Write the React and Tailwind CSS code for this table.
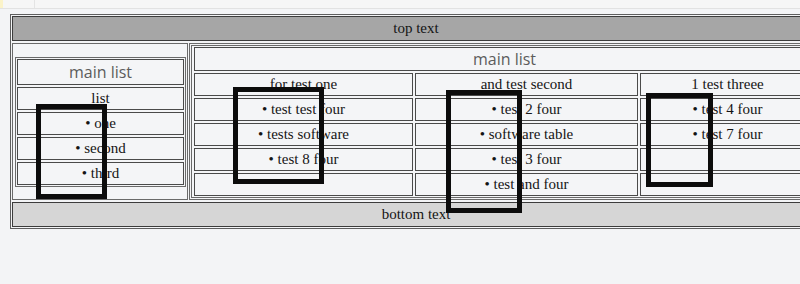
import React from "react";

const serif = { fontFamily: '"Liberation Serif", "Times New Roman", serif' };
const sans = { fontFamily: '"Open Sans", "DejaVu Sans", sans-serif' };

function Cell({ children, className = "", head = false }) {
  return (
    <div
      className={`border border-[#4a4a4a] bg-[#f4f5f7] flex items-center justify-center leading-none whitespace-nowrap ${
        head ? "text-[16px] text-[#5c5c5c]" : "text-[15px] text-[#141414]"
      } ${className}`}
      style={head ? sans : serif}
    >
      {children}
    </div>
  );
}

function Box({ className }) {
  return <div className={`absolute border-[5px] border-[#0c0c0c] ${className}`} />;
}

export default function App() {
  const leftItems = ["list", "• one", "• second", "• third"];
  const rows = [
    ["for test one", "and test second", "1 test threee"],
    ["• test test four", "• test 2 four", "• test 4 four"],
    ["• tests software", "• software table", "• test 7 four"],
    ["• test 8 four", "• test 3 four", ""],
    ["", "• test and four", ""],
  ];
  return (
    <div className="relative w-[800px] h-[284px] overflow-hidden bg-[#f3f4f6]">
      <div className="h-[9px] bg-[#f6f6f6] border-b border-[#e2e2e2] flex">
        <div className="w-[3px] bg-[#fbf3c9]" />
        <div className="w-[32px] border-r border-[#e4e4e4]" />
      </div>
      <div className="ml-[10px] mt-[5px] w-[812px] border border-[#5e5e5e] p-[1px] flex flex-col gap-[2px]">
        <div
          className="h-[25px] border border-[#3c3c3c] bg-[#a6a6a6] flex items-center justify-center text-[15px] text-[#141414] leading-none"
          style={serif}
        >
          top text
        </div>
        <div className="flex gap-[1px]">
          <div className="w-[176px] border border-[#6a6a6a] bg-[#f4f5f7] flex items-center pl-[2px] pr-[1px]">
            <div className="flex-1 border border-[#6a6a6a] p-[1px] flex flex-col gap-[2px]">
              <Cell head className="h-[26px]">main list</Cell>
              {leftItems.map((t) => (
                <Cell key={t} className="h-[23px]">
                  {t}
                </Cell>
              ))}
            </div>
          </div>
          <div className="flex-1 border border-[#6a6a6a] bg-[#f4f5f7] p-[1px]">
            <div className="border border-[#6a6a6a] px-[2px] py-[1px] flex flex-col gap-[2px]">
              <Cell head className="h-[24px]">main list</Cell>
              <div className="grid grid-cols-[219px_223px_1fr] gap-[2px]">
                {rows.flat().map((t, i) => (
                  <Cell key={i} className="h-[23px]">
                    {t}
                  </Cell>
                ))}
              </div>
            </div>
          </div>
        </div>
        <div
          className="h-[25px] border border-[#3c3c3c] bg-[#d6d6d6] flex items-center justify-center text-[15px] text-[#141414] leading-none"
          style={serif}
        >
          bottom text
        </div>
      </div>
      <Box className="left-[36px] top-[104px] w-[71px] h-[95px]" />
      <Box className="left-[233px] top-[87px] w-[91px] h-[97px]" />
      <Box className="left-[446px] top-[90px] w-[76px] h-[123px]" />
      <Box className="left-[646px] top-[93px] w-[67px] h-[94px]" />
    </div>
  );
}
